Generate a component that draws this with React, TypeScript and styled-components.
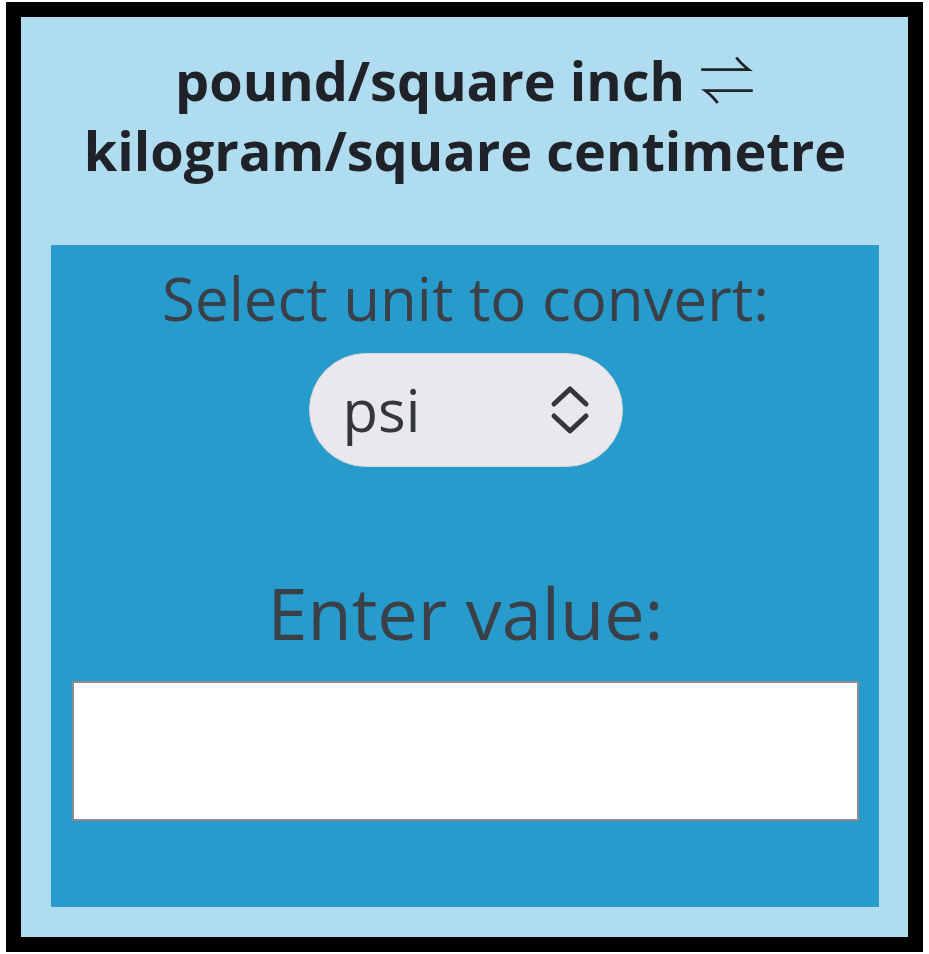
import React, { useState } from "react";
import styled, { createGlobalStyle } from "styled-components";

const GlobalStyle = createGlobalStyle`
  html, body {
    margin: 0;
    padding: 0;
    background: #ffffff;
  }

  * {
    box-sizing: border-box;
  }
`;

const UNITS = ["psi", "kg/cm²"];

const Converter = () => {
  const [unit, setUnit] = useState(UNITS[0]);
  const [value, setValue] = useState("");

  return (
    <StyledConverter>
      <h2 className="title">
        pound/square inch <span className="swap">⇌</span>
        <br />
        kilogram/square centimetre
      </h2>
      <Panel>
        <Label htmlFor="unit">Select unit to convert:</Label>
        <SelectWrap>
          <UnitSelect
            id="unit"
            value={unit}
            onChange={(e) => setUnit(e.target.value)}
          >
            {UNITS.map((u) => (
              <option key={u} value={u}>
                {u}
              </option>
            ))}
          </UnitSelect>
          <Chevrons viewBox="0 0 40 50" aria-hidden="true">
            <path d="M4 19 L20 4 L36 19" />
            <path d="M4 31 L20 46 L36 31" />
          </Chevrons>
        </SelectWrap>
        <Label htmlFor="value" $big>
          Enter value:
        </Label>
        <ValueInput
          id="value"
          type="number"
          value={value}
          onChange={(e) => setValue(e.target.value)}
        />
      </Panel>
    </StyledConverter>
  );
};

const App = () => (
  <>
    <GlobalStyle />
    <Converter />
  </>
);

export default App;

const StyledConverter = styled.div`
  margin: 2px 6px;
  width: 917px;
  height: 950px;
  border: 15px solid #000;
  background: #b0dcf0;
  padding: 28px 29px 30px 30px;
  font-family: "Open Sans", "DejaVu Sans", sans-serif;

  .title {
    margin: 0 0 60px 0;
    height: 140px;
    font-size: 54px;
    line-height: 70px;
    font-weight: 700;
    text-align: center;
    color: #202229;
  }

  /* the swap arrows come from a lighter face than the bold heading */
  .swap {
    display: inline-block;
    font-family: "Noto Sans CJK JP", "DejaVu Sans", sans-serif;
    font-weight: 300;
    font-size: 56px;
    line-height: 0;
  }
`;

const Panel = styled.div`
  background: #279bcc;
  height: 662px;
  padding: 13px 20px 0 21px;
  display: flex;
  flex-direction: column;
  align-items: center;
`;

const Label = styled.label<{ $big?: boolean }>`
  display: block;
  font-size: ${(p) => (p.$big ? "72px" : "60px")};
  line-height: 1.362;
  color: #3b3f48;
  margin-top: ${(p) => (p.$big ? "96px" : "0")};
  margin-bottom: ${(p) => (p.$big ? "20px" : "13px")};
`;

const SelectWrap = styled.div`
  position: relative;
  width: 314px;
  height: 114px;
`;

const UnitSelect = styled.select`
  appearance: none;
  width: 100%;
  height: 100%;
  border: 1px solid #d6d6da;
  border-radius: 57px;
  background: #e9e9ed;
  padding: 0 0 0 33px;
  font-family: "Open Sans", sans-serif;
  font-size: 58px;
  color: #33363d;
  outline: none;
`;

const Chevrons = styled.svg`
  position: absolute;
  right: 33px;
  top: 32px;
  width: 40px;
  height: 50px;
  pointer-events: none;
  fill: none;
  stroke: #33363d;
  stroke-width: 5;
  stroke-linecap: round;
  stroke-linejoin: round;
`;

const ValueInput = styled.input`
  width: 100%;
  height: 140px;
  border: 2px solid #8c8c8c;
  background: #fff;
  font-family: "Open Sans", sans-serif;
  font-size: 40px;
  padding: 0 12px;
  outline: none;
  appearance: textfield;

  &::-webkit-inner-spin-button,
  &::-webkit-outer-spin-button {
    -webkit-appearance: none;
    margin: 0;
  }
`;
